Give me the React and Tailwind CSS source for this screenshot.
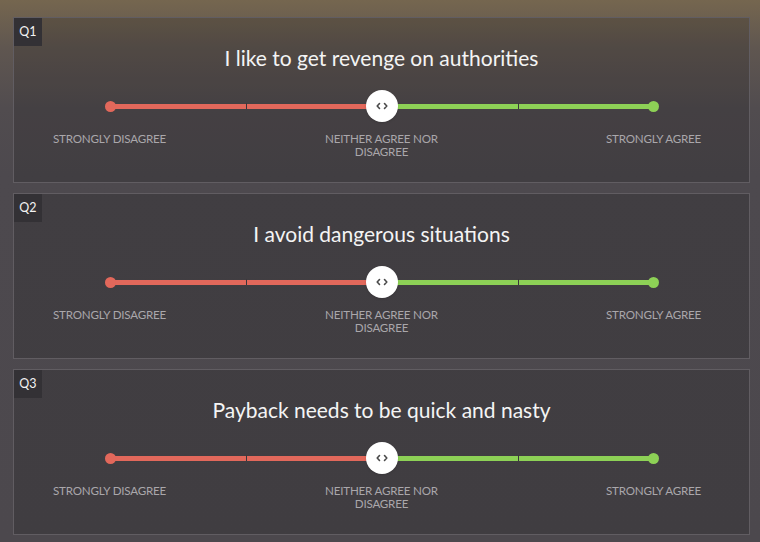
import React from "react"

const questions = [
	{ id: "Q1", text: "I like to get revenge on authorities" },
	{ id: "Q2", text: "I avoid dangerous situations" },
	{ id: "Q3", text: "Payback needs to be quick and nasty" },
]

function Slider() {
	return (
		<div className="w-[668px] mx-auto">
			<div className="px-[62px]">
				<div className="relative h-[32px] flex items-center">
					<div className="absolute left-0 right-1/2 h-[5px] bg-[#e2685b] rounded-full" />
					<div className="absolute left-1/2 right-0 h-[5px] bg-[#8dd156] rounded-full" />
					<div className="absolute left-[-5px] w-[11px] h-[11px] rounded-full bg-[#e2685b]" />
					<div className="absolute right-[-5px] w-[11px] h-[11px] rounded-full bg-[#8dd156]" />
					<div className="absolute left-1/4 w-[1px] h-[6px] bg-[#3a363b]" />
					<div className="absolute left-3/4 w-[1px] h-[6px] bg-[#3a363b]" />
					<div className="absolute left-1/2 -translate-x-1/2 w-[32px] h-[32px] rounded-full bg-white flex items-center justify-center shadow">
						<svg width="12" height="8" viewBox="0 0 12 8" fill="none" stroke="#4a4a4a" strokeWidth="1.6" strokeLinecap="round" strokeLinejoin="round">
							<path d="M3.5 1.5 1.2 4l2.3 2.5" />
							<path d="M8.5 1.5 10.8 4 8.5 6.5" />
						</svg>
					</div>
				</div>
			</div>
			<div className="flex justify-between mt-[10px] text-[11.6px] leading-[13px] text-[#aaa7ab] tracking-[-0.2px] uppercase">
				<span className="w-[124px] text-center">Strongly Disagree</span>
				<span className="w-[124px] text-center">Neither Agree Nor Disagree</span>
				<span className="w-[124px] text-center">Strongly Agree</span>
			</div>
		</div>
	)
}

function QuestionCard({ q }) {
	return (
		<div className="relative h-[166px] border border-[#615d62] bg-black/15">
			<div className="absolute left-0 top-0 w-[28px] h-[28px] bg-[#333135] text-[#f2f2f2] text-[12.5px] flex items-center justify-center">
				{q.id}
			</div>
			<h2 className="pt-[26px] text-center text-[21px] leading-[28px] text-[#f4f4f4]">{q.text}</h2>
			<div className="mt-[18px]">
				<Slider />
			</div>
		</div>
	)
}

export default function App() {
	return (
		<div
			className="w-[760px] h-[542px] overflow-hidden pl-[13px] pr-[10px] pt-[17px] bg-[linear-gradient(to_bottom,#75664f_0%,#5f5650_9%,#514c4f_20%,#4d494e_32%,#4c484d_100%)]"
			style={{ fontFamily: "Lato, 'Open Sans', sans-serif" }}
		>
			<div className="flex flex-col gap-[10px]">
				{questions.map((q) => (
					<QuestionCard key={q.id} q={q} />
				))}
			</div>
		</div>
	)
}
